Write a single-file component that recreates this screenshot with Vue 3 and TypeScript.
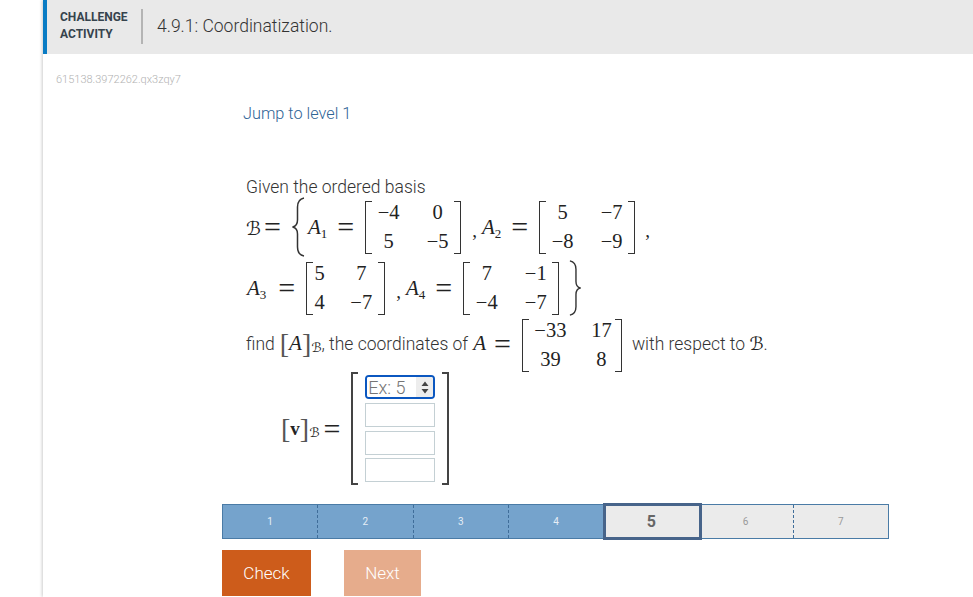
<script setup lang="ts">
interface Matrix { cls: string; rows: string[][] }
const m = (cls: string, rows: string[][]): Matrix => ({ cls, rows })
const a1 = m('wide', [['−4', '0'], ['5', '−5']])
const a2 = m('wide', [['5', '−7'], ['−8', '−9']])
const a3 = m('narrow', [['5', '7'], ['4', '−7']])
const a4 = m('wide', [['7', '−1'], ['−4', '−7']])
const target = m('big', [['−33', '17'], ['39', '8']])
const steps = [
  { n: 1, state: 'done' }, { n: 2, state: 'done' }, { n: 3, state: 'done' }, { n: 4, state: 'done' },
  { n: 5, state: 'current' }, { n: 6, state: 'todo' }, { n: 7, state: 'todo' },
]
</script>

<template>
  <div class="page">
    <header class="head">
      <div class="kicker">CHALLENGE<br />ACTIVITY</div>
      <h1 class="title">4.9.1: Coordinatization.</h1>
    </header>
    <div class="ident">615138.3972262.qx3zqy7</div>
    <main class="content">
      <a class="jump">Jump to level 1</a>
      <section class="problem">
        <p class="given">Given the ordered basis</p>

        <div class="line l1">
          <span class="script">ℬ</span><span class="eq e0">=</span>
          <svg class="brace" width="14" height="60" viewBox="0 0 14 60"><path d="M13 1C8 2 6.500 5 6.500 10V23C6.500 27 4.500 29.500 1.500 30C4.500 30.500 6.500 33 6.500 37V50C6.500 55 8 58 13 59" fill="none" stroke="#333" stroke-width="1.500" /></svg>
          <span class="var v1">A<sub>1</sub></span><span class="eq e1">=</span>
          <div class="matrix wide">
            <template v-for="(r, i) in a1.rows" :key="i"><span v-for="(c, j) in r" :key="j" class="cell">{{ c }}</span></template>
          </div>
          <span class="comma c1">,</span>
          <span class="var v2">A<sub>2</sub></span><span class="eq e1">=</span>
          <div class="matrix wide">
            <template v-for="(r, i) in a2.rows" :key="i"><span v-for="(c, j) in r" :key="j" class="cell">{{ c }}</span></template>
          </div>
          <span class="comma c2">,</span>
        </div>

        <div class="line l2">
          <span class="var v3">A<sub>3</sub></span><span class="eq e1b">=</span>
          <div class="matrix narrow">
            <template v-for="(r, i) in a3.rows" :key="i"><span v-for="(c, j) in r" :key="j" class="cell">{{ c }}</span></template>
          </div>
          <span class="comma c1">,</span>
          <span class="var v2">A<sub>4</sub></span><span class="eq e1">=</span>
          <div class="matrix wide">
            <template v-for="(r, i) in a4.rows" :key="i"><span v-for="(c, j) in r" :key="j" class="cell">{{ c }}</span></template>
          </div>
          <svg class="brace rb" width="15" height="56" viewBox="0 0 14 60"><path d="M1 1C6 2 7.500 5 7.500 10V23C7.500 27 9.500 29.500 12.500 30C9.500 30.500 7.500 33 7.500 37V50C7.500 55 6 58 1 59" fill="none" stroke="#333" stroke-width="1.500" /></svg>
        </div>

        <div class="line l3">
          <span class="txt">find</span>
          <span class="br b1">[</span><span class="var av">A</span><span class="br">]</span><span class="script sm">ℬ</span>
          <span class="txt t2">, the coordinates of</span>
          <span class="var av a2">A</span><span class="eq e2">=</span>
          <div class="matrix big">
            <template v-for="(r, i) in target.rows" :key="i"><span v-for="(c, j) in r" :key="j" class="cell">{{ c }}</span></template>
          </div>
          <span class="txt t3">with respect to <span class="script inl">ℬ</span>.</span>
        </div>

        <div class="line l4">
          <span class="br b2">[</span><b class="vec">v</b><span class="br">]</span><span class="script sm">ℬ</span>
          <span class="eq e3">=</span>
          <div class="column">
            <div class="field focus">
              <input class="inp" placeholder="Ex: 5" />
              <span class="spin">
                <svg width="8" height="13" viewBox="0 0 8 13"><path d="M4 0.500L7.500 5H0.500ZM4 12.500L0.500 8H7.500Z" fill="#444" /></svg>
              </span>
            </div>
            <div class="field"></div>
            <div class="field"></div>
            <div class="field last"></div>
          </div>
        </div>
      </section>

      <div class="progress">
        <div v-for="s in steps" :key="s.n" class="step" :class="s.state">{{ s.n }}</div>
      </div>
      <div class="actions">
        <button class="btn check">Check</button>
        <button class="btn next">Next</button>
      </div>
    </main>
  </div>
</template>

<style>
html, body { margin: 0; background: #fff; overflow: hidden; }
</style>

<style scoped>
.page {
  margin-left: 43px;
  height: 597px;
  overflow: hidden;
  background: #fff;
  box-shadow: -1px 0 3px rgba(0, 0, 0, 0.2);
  font-family: Roboto, sans-serif;
  font-weight: 300;
  color: #333;
}
.head {
  height: 54px;
  box-sizing: border-box;
  background: #e9e9e9;
  border-left: 4px solid #0a7cc4;
  display: flex;
  align-items: center;
  padding-left: 13px;
}
.kicker {
  font-size: 12px;
  font-weight: 700;
  line-height: 17px;
  color: #36434d;
  width: 81px;
  height: 35px;
  margin-top: -1px;
  border-right: 2px solid #b4b4b4;
  padding-right: 0;
}
.title {
  margin: -3px 0 0 14px;
  font-size: 17.500px;
  font-weight: 300;
  color: #333;
}
.ident {
  margin: 19px 0 0 13px;
  font-size: 11px;
  line-height: 14px;
  color: #b2b2b2;
}
.content {
  margin-left: 179px;
  width: 667px;
}
.jump {
  display: block;
  margin: 17px 0 0 21px;
  font-size: 16.300px;
  line-height: 20px;
  font-weight: 300;
  color: #2f6496;
}
.problem {
  margin: 53px 0 0 24px;
  font-family: "Liberation Serif", serif;
  font-weight: 400;
}
.given {
  margin: 0;
  height: 20px;
  font: 300 17.500px/20px Roboto, sans-serif;
}
.line {
  display: flex;
  align-items: center;
  font-size: 20.500px;
  color: #222;
}
.l1 { height: 56px; margin-top: 2px; }
.l2 { height: 56px; margin-top: 5px; }
.l3 { height: 57px; margin-top: 1px; }
.l4 { height: 113px; margin-top: -2px; margin-left: 35px; }
.l3 .txt, .l3 .br, .l3 .var, .l3 .sm, .l3 .eq { margin-bottom: 4px; }
.script {
  font-family: "DejaVu Sans", serif;
  font-size: 19px;
  width: 17px;
  margin-top: 2px;
}
.script.sm { font-size: 13px; width: auto; margin-top: 8px; }
.script.inl { font-size: 18px; width: auto; color: #222; font-weight: 400; }
.eq, .e1b { font-size: 30px; line-height: 1; display: inline-block; }
.e0 { margin-left: 1px; }
.e1 { margin-left: 8px; }
.e1b { margin-left: 10px; }
.e2 { margin-left: 8px; }
.e3 { margin-left: 4px; }
.var { font-style: italic; font-size: 21px; }
.var sub { font-style: normal; font-size: 13px; line-height: 0; vertical-align: -4px; margin-right: 2px; }
.v1 { margin-left: 3px; }
.v2 { margin-left: 5px; }
.v3 { margin-left: 1px; }
.brace { margin-left: 10px; flex: none; }
.brace.rb { margin-left: 9px; }
.comma { font-size: 19px; margin-top: 8px; }
.c1 { margin-left: 11px; }
.c2 { margin-left: 10px; }
.matrix {
  position: relative;
  display: inline-grid;
  row-gap: 7px;
  margin-left: 11px;
  box-sizing: border-box;
  height: 53px;
  align-content: center;
  justify-items: center;
  line-height: 22px;
  font-size: 20.500px;
  padding-bottom: 2px;
}
.matrix::before, .matrix::after {
  content: "";
  position: absolute;
  top: 0;
  bottom: 0;
  width: 7px;
  border: 1.500px solid #333;
  box-sizing: border-box;
}
.matrix::before { left: 0; border-right: 0; }
.matrix::after { right: 0; border-left: 0; }
.wide { grid-template-columns: 23px 23px; column-gap: 26px; padding-left: 12px; padding-right: 12px; width: 96px; }
.narrow { grid-template-columns: 10.500px 23px; column-gap: 25px; padding-left: 8px; padding-right: 12px; width: 79px; margin-left: 11px; }
.big { grid-template-columns: 33px 21px; column-gap: 24px; padding-left: 12px; padding-right: 10px; width: 100px; margin-left: 11px; }
.txt { font: 300 17.500px/20px Roboto, sans-serif; color: #333; white-space: pre; }
.t2 { margin-left: 0; }
.t3 { margin-left: 10px; }
.br { font-size: 28px; font-weight: 400; line-height: 1; color: #555; }
.b1 { margin-left: 5px; }
.av { font-size: 21px; }
.a2 { margin-left: 5px; }
.vec { font-size: 19px; font-weight: 700; }
.column {
  position: relative;
  box-sizing: border-box;
  width: 98px;
  height: 113px;
  margin-left: 11px;
  padding: 3px 13px 0 14px;
  display: flex;
  flex-direction: column;
}
.column::before, .column::after {
  content: "";
  position: absolute;
  top: 0;
  bottom: 0;
  width: 7px;
  border: 2px solid #444;
  box-sizing: border-box;
}
.column::before { left: 0; border-right: 0; }
.column::after { right: 0; border-left: 0; }
.field {
  box-sizing: border-box;
  width: 70px;
  height: 24px;
  margin-bottom: 4px;
  border: 1px solid #c4d0d4;
  flex: none;
}
.field.last { margin-top: -1px; }
.field.focus {
  height: 24px;
  border: 2.500px solid #0b57c0;
  border-radius: 4px;
  display: flex;
  overflow: hidden;
}
.inp {
  flex: 1;
  min-width: 0;
  border: 0;
  outline: 0;
  padding: 0 0 0 1px;
  font: 300 18px Roboto, sans-serif;
  background: #fff;
}
.inp::placeholder { color: #757575; opacity: 1; }
.spin {
  flex: none;
  width: 17px;
  background: #ededed;
  display: flex;
  align-items: center;
  justify-content: center;
}
.progress {
  display: flex;
  margin-top: 19px;
  height: 35px;
  box-sizing: border-box;
  border: 1px solid #4a7ba6;
}
.step {
  position: relative;
  flex: 1;
  display: flex;
  align-items: center;
  justify-content: center;
  font: 400 10px Roboto, sans-serif;
  border-right: 1px dashed #3f6d99;
}
.step:last-child { border-right: 0; }
.done { background: #75a3cc; color: #e6eef6; }
.todo { background: #ebebeb; color: #999; }
.current {
  background: #ebebeb;
  color: #666;
  font-size: 16px;
  font-weight: 700;
  border: 0;
}
.current::after {
  content: "";
  position: absolute;
  z-index: 1;
  inset: -2px -4px -2px -1px;
  border: 3px solid #47648a;
}
.actions {
  display: flex;
  gap: 33px;
  margin-top: 11px;
}
.btn {
  height: 46px;
  border: 0;
  padding: 0;
  color: #fff;
  font: 300 17px Roboto, sans-serif;
}
.check { width: 89px; background: #cd5c1b; }
.next { width: 77px; background: #e6ac8c; }
</style>
